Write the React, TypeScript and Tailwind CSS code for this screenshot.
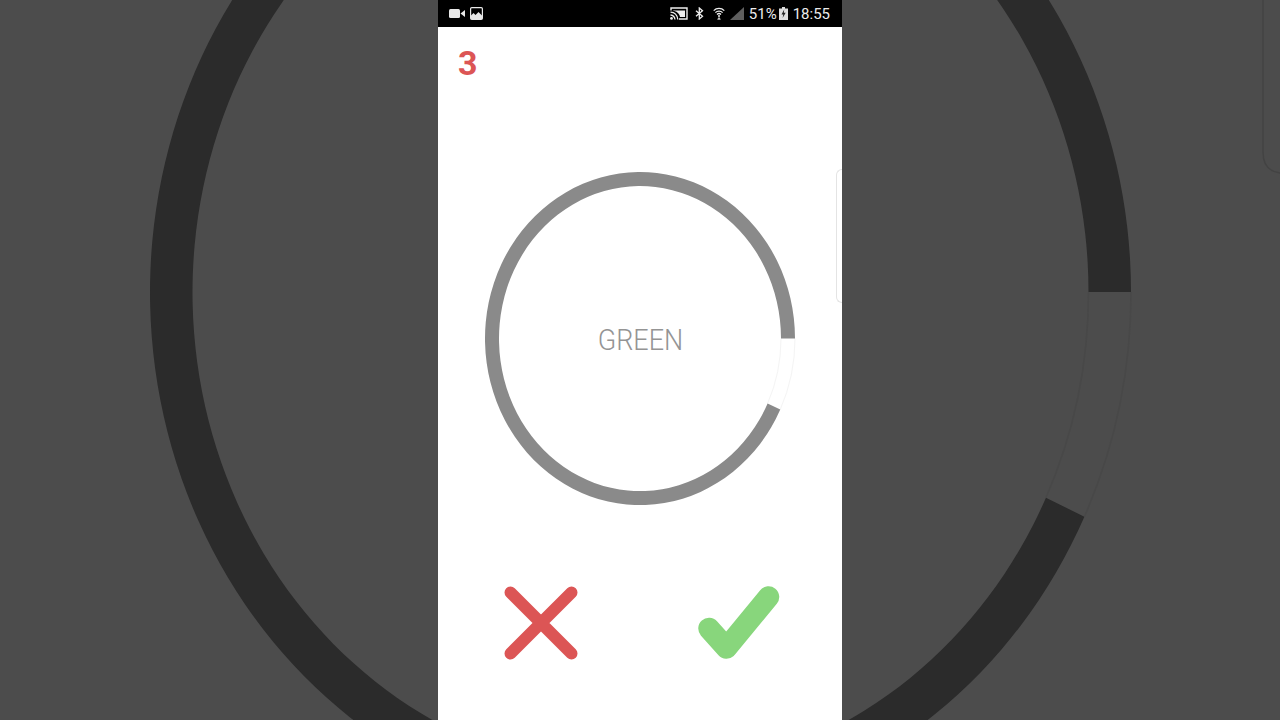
function ringPath(cx: number, cy: number, rx: number, ry: number, irx: number, iry: number) {
  const c = 0.905;
  const s = 0.426;
  return `M ${cx + rx * c} ${cy + ry * s} A ${rx} ${ry} 0 1 1 ${cx + rx} ${cy} L ${cx + irx} ${cy} A ${irx} ${iry} 0 1 0 ${cx + irx * c} ${cy + iry * s} Z`;
}

function gapPath(cx: number, cy: number, rx: number, ry: number) {
  return `M ${cx + rx} ${cy} A ${rx} ${ry} 0 0 1 ${cx + rx * 0.905} ${cy + ry * 0.426}`;
}

function BackdropRing({ viewBox, side }: { viewBox: string; side: "left" | "right" }) {
  const cx = 640.5;
  const cy = 292;
  return (
    <svg width="438" height="720" viewBox={viewBox} className="block">
      <path d={ringPath(cx, cy, 490.5, 527.5, 448, 483)} fill="#2b2b2b" />
      <path d={gapPath(cx, cy, 490.5, 527.5)} fill="none" stroke="#484848" strokeWidth="1.5" />
      <path d={gapPath(cx, cy, 448, 483)} fill="none" stroke="#484848" strokeWidth="1.5" />
      {side === "right" && (
        <path d="M 1263 0 L 1263 152 Q 1263 171 1280 173" fill="none" stroke="#434343" strokeWidth="1.5" />
      )}
    </svg>
  );
}

function StatusLeft() {
  return (
    <div className="flex items-center gap-[5px]">
      <svg width="16" height="9" viewBox="0 0 16 9" className="block">
        <rect x="0" y="0" width="11" height="9" rx="1.5" fill="#e8e8e8" />
        <path d="M11.5 4.5 L16 1 V8 Z" fill="#e8e8e8" />
      </svg>
      <svg width="13" height="13" viewBox="0 0 13 13" className="block">
        <rect x="0.6" y="0.6" width="11.8" height="11.8" rx="1.2" fill="#000" stroke="#e8e8e8" strokeWidth="1.2" />
        <path d="M1 12 V8.5 L3.5 6 L5.5 8 L8.5 5 L12 8.5 V12 Z" fill="#e8e8e8" />
      </svg>
    </div>
  );
}

function StatusRight() {
  return (
    <div className="flex items-center">
      <svg width="18" height="13" viewBox="0 0 18 13" className="block">
        <path d="M1 3.5 V1 H17 V12 H9" fill="none" stroke="#eeeeee" strokeWidth="1.4" />
        <path d="M3 3.5 H15 V10 H10 C9.6 7 7 4.2 3 3.8 Z" fill="#eeeeee" />
        <path d="M0.5 5.2 C4.5 5.4 7.3 8.2 7.8 12.5 M0.5 8 C2.9 8.2 4.7 10 5 12.5" fill="none" stroke="#eeeeee" strokeWidth="1.3" />
        <circle cx="1.5" cy="11.4" r="1.4" fill="#eeeeee" />
      </svg>
      <svg width="9" height="13" viewBox="0 0 9 13" className="block ml-[7px]">
        <path d="M1 3.7 L7.5 9.3 L4.3 12 V1 L7.5 3.7 L1 9.3" fill="none" stroke="#eeeeee" strokeWidth="1.3" />
      </svg>
      <svg width="12" height="13" viewBox="0 0 12 13" className="block ml-[9px]">
        <path d="M0.7 3.6 C3.6 0.6 8.4 0.6 11.3 3.6 M2.4 5.6 C4.3 3.6 7.7 3.6 9.6 5.6 M4 7.5 C5.1 6.4 6.9 6.4 8 7.5" fill="none" stroke="#eeeeee" strokeWidth="1.2" />
        <circle cx="6" cy="9" r="1" fill="#eeeeee" />
        <path d="M4.2 12.8 L5.2 10.5 H6.8 L7.8 12.8 Z" fill="#bbbbbb" />
      </svg>
      <svg width="14" height="13" viewBox="0 0 14 13" className="block ml-[5px]">
        <path d="M14 0 V13 H0 Z" fill="#5f5f5f" />
      </svg>
      <span className="ml-[5px] text-[15px] leading-[20px] text-[#ececec] [font-family:Roboto,sans-serif]">51%</span>
      <svg width="9" height="13" viewBox="0 0 9 13" className="block ml-[2px]">
        <path d="M3 0 H6 V1.5 H9 V13 H0 V1.5 H3 Z" fill="#dddddd" />
        <path d="M5.2 2.5 L2.5 7.5 H4.3 L3.6 11 L6.7 5.8 H4.8 Z" fill="#222222" />
      </svg>
      <span className="ml-[5px] text-[15px] leading-[20px] text-[#ececec] [font-family:Roboto,sans-serif]">18:55</span>
    </div>
  );
}

function Dial() {
  const cx = 202;
  const cy = 166.5;
  return (
    <div className="relative h-[333px] w-[404px]">
      <svg width="404" height="333" viewBox="0 0 404 333" className="block">
        <path d={gapPath(cx, cy, 155, 166.5)} fill="none" stroke="#f4f4f4" strokeWidth="1" />
        <path d={gapPath(cx, cy, 141, 152.5)} fill="none" stroke="#f4f4f4" strokeWidth="1" />
        <path d={ringPath(cx, cy, 155, 166.5, 141, 152.5)} fill="#8a8a8a" />
      </svg>
      <div className="absolute inset-0 flex items-center justify-center pt-[4px] pl-[1px]">
        <span className="scale-y-[1.06] text-[27px] font-light leading-none text-[#949494] [font-family:Roboto,sans-serif]">GREEN</span>
      </div>
    </div>
  );
}

export default function App() {
  return (
    <div className="flex h-[720px] w-[1280px] overflow-hidden bg-[#4c4c4c]">
      <div className="w-[438px] shrink-0">
        <BackdropRing viewBox="0 0 438 720" side="left" />
      </div>

      <div className="relative flex w-[404px] shrink-0 flex-col bg-white">
        <div className="flex h-[27px] items-center justify-between bg-black pl-[11px] pr-[12px]">
          <StatusLeft />
          <StatusRight />
        </div>

        <div className="pl-[20px] pt-[16px]">
          <span className="block text-[34px] font-bold leading-[40px] text-[#dc5555] [font-family:Roboto,sans-serif]">3</span>
        </div>

        <div className="mt-[89px]">
          <Dial />
        </div>

        <div className="mt-[81px] flex items-start pl-[66px]">
          <svg width="74" height="74" viewBox="0 0 74 74" className="block">
            <path d="M6.5 6.5 L67.5 67.5 M67.5 6.5 L6.5 67.5" fill="none" stroke="#dc5555" strokeWidth="12" strokeLinecap="round" />
          </svg>
          <svg width="82" height="74" viewBox="0 0 82 74" className="ml-[120px] block">
            <path d="M11 42.5 L28.5 62 L70.5 11" fill="none" stroke="#88d67c" strokeWidth="21.5" strokeLinecap="round" strokeLinejoin="round" />
          </svg>
        </div>

        <div className="absolute right-0 top-[169px] h-[134px] w-[6px] rounded-l-[6px] border border-r-0 border-[#e4e4e4]" />
      </div>

      <div className="w-[438px] shrink-0">
        <BackdropRing viewBox="842 0 438 720" side="right" />
      </div>
    </div>
  );
}
